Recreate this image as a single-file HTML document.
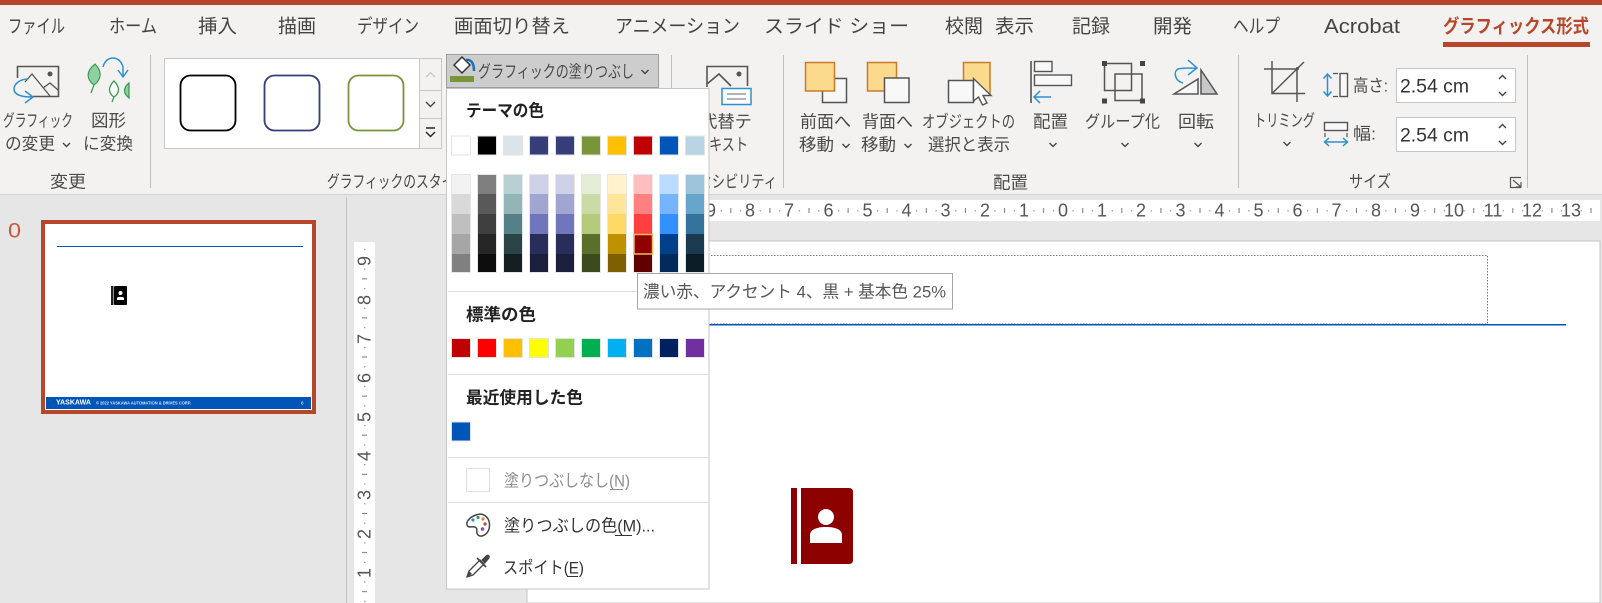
<!DOCTYPE html>
<html lang="ja">
<head>
<meta charset="utf-8">
<title>PowerPoint</title>
<style>
html,body{margin:0;padding:0;width:1602px;height:603px;overflow:hidden;background:#e6e6e6}
svg{display:block}
text{font-family:"Liberation Sans","Noto Sans CJK JP",sans-serif;font-size:17px;fill:#4a4a4a;dominant-baseline:central}
.t{font-size:19px;fill:#444}
.b{font-weight:700;fill:#222;font-size:17px}
.r{font-size:18px;fill:#555}
.ch{fill:none;stroke:#444;stroke-width:1.4}
.ic{fill:none;stroke:#555;stroke-width:1.6}
.sep{stroke:#dcdcdc;stroke-width:1}
.div{stroke:#bdbdbd;stroke-width:1}
.sw{stroke:#e3e3e3;stroke-width:1}
</style>
</head>
<body>
<svg width="1602" height="603" viewBox="0 0 1602 603" xmlns="http://www.w3.org/2000/svg">
<defs>
<pattern id="hr" x="1063" y="200" width="39.1" height="21" patternUnits="userSpaceOnUse">
<rect x="9.6" y="10" width="1" height="1.5" fill="#888"/><rect x="19.2" y="8" width="1" height="5" fill="#777"/><rect x="29" y="10" width="1" height="1.5" fill="#888"/>
</pattern>
<pattern id="vr" x="354" y="611" width="21" height="39.1" patternUnits="userSpaceOnUse">
<rect x="10" y="9.6" width="1.5" height="1" fill="#888"/><rect x="8" y="19.2" width="5" height="1" fill="#777"/><rect x="10" y="29" width="1.5" height="1" fill="#888"/>
</pattern>
</defs>

<!-- base -->
<rect width="1602" height="603" fill="#e6e6e6"/>
<rect width="1602" height="194" fill="#f3f2f1"/>
<rect y="194" width="1602" height="1" fill="#d2d2d2"/>
<rect width="1602" height="5" fill="#b7472a"/>

<!-- tabs -->
<text class="t" x="8" y="27" textLength="57" lengthAdjust="spacingAndGlyphs">ファイル</text>
<text class="t" x="109" y="27" textLength="48" lengthAdjust="spacingAndGlyphs">ホーム</text>
<text class="t" x="198" y="27" textLength="39" lengthAdjust="spacingAndGlyphs">挿入</text>
<text class="t" x="278" y="27" textLength="38" lengthAdjust="spacingAndGlyphs">描画</text>
<text class="t" x="357" y="27" textLength="62" lengthAdjust="spacingAndGlyphs">デザイン</text>
<text class="t" x="454" y="27" textLength="116" lengthAdjust="spacingAndGlyphs">画面切り替え</text>
<text class="t" x="615" y="27" textLength="125" lengthAdjust="spacingAndGlyphs">アニメーション</text>
<text class="t" x="764" y="27" textLength="145" lengthAdjust="spacingAndGlyphs">スライド ショー</text>
<text class="t" x="945" y="27" textLength="38" lengthAdjust="spacingAndGlyphs">校閲</text>
<text class="t" x="995" y="27" textLength="39" lengthAdjust="spacingAndGlyphs">表示</text>
<text class="t" x="1072" y="27" textLength="38" lengthAdjust="spacingAndGlyphs">記録</text>
<text class="t" x="1153" y="27" textLength="39" lengthAdjust="spacingAndGlyphs">開発</text>
<text class="t" x="1233" y="27" textLength="47" lengthAdjust="spacingAndGlyphs">ヘルプ</text>
<text class="t" x="1324" y="27" textLength="76" lengthAdjust="spacingAndGlyphs" style="font-size:20px">Acrobat</text>
<text class="t" x="1443" y="27" textLength="146" lengthAdjust="spacingAndGlyphs" style="font-weight:700;fill:#b7472a">グラフィックス形式</text>
<rect x="1443" y="42" width="147" height="5" fill="#b7472a"/>

<!-- group dividers -->
<path class="div" d="M150.500 55V188M671.500 55V188M783.500 55V188M1238.500 55V188M1527.500 55V188"/>

<!-- change group -->
<path d="M17.500 78V66.500H58.500V96.500H33" class="ic"/>
<path d="M25 82L32 74L50 96M43 88L50 83L58 90" fill="none" stroke="#555" stroke-width="1.300"/>
<circle cx="50" cy="74" r="2.500" fill="#555"/>
<path d="M28 79C20 79 14 84 14 89C14 94 20 97 32 97M25 91L33 97L25 103" fill="none" stroke="#2e8fd0" stroke-width="1.500"/>
<path d="M95 64C86 71 86 79 94 85C102 79 102 71 95 64Z" fill="#8fd19e" stroke="#3a9a55" stroke-width="1.200"/>
<path d="M94 85L91 93" stroke="#3a9a55" stroke-width="1.300" fill="none"/>
<path d="M103 67C106 55 120 55 123 67V76M118 70L123 77L128 70" fill="none" stroke="#2e8fd0" stroke-width="1.500"/>
<path d="M114 81C108 87 108 93 114 97C120 93 120 87 114 81ZM114 97L112 102" fill="#fff" stroke="#3a9a55" stroke-width="1.300"/>
<path d="M129 83C123 88 123 93 129 98V83Z" fill="#8fd19e" stroke="#3a9a55" stroke-width="1.300"/>
<text x="3" y="121" textLength="70" lengthAdjust="spacingAndGlyphs">グラフィック</text>
<text x="5" y="144" textLength="50" lengthAdjust="spacingAndGlyphs">の変更</text>
<path class="ch" d="M63 143L66.500 146.500L70 143"/>
<text x="91" y="121" textLength="35" lengthAdjust="spacingAndGlyphs">図形</text>
<text x="83" y="144" textLength="50" lengthAdjust="spacingAndGlyphs">に変換</text>
<text x="50" y="182" textLength="36" lengthAdjust="spacingAndGlyphs">変更</text>

<!-- gallery -->
<rect x="164.500" y="58.500" width="255" height="90" fill="#fff" stroke="#c8c8c8"/>
<rect x="180.500" y="75.500" width="55" height="55" rx="10" fill="#fff" stroke="#000" stroke-width="1.800"/>
<rect x="264.500" y="75.500" width="55" height="55" rx="10" fill="#fff" stroke="#373d78" stroke-width="1.800"/>
<rect x="348.500" y="75.500" width="55" height="55" rx="10" fill="#fff" stroke="#7a943a" stroke-width="1.800"/>
<rect x="419.500" y="58.500" width="22" height="32" fill="#f3f2f1" stroke="#c8c8c8"/>
<rect x="419.500" y="90.500" width="22" height="28" fill="#f3f2f1" stroke="#c8c8c8"/>
<rect x="419.500" y="118.500" width="22" height="30" fill="#f3f2f1" stroke="#c8c8c8"/>
<path d="M426 77L430.500 72.500L435 77" fill="none" stroke="#c8c8c8" stroke-width="1.300"/>
<path class="ch" d="M426 102L430.500 106.500L435 102" stroke="#222"/>
<path d="M426 128H435M426 132L430.500 136.500L435 132" fill="none" stroke="#222" stroke-width="1.400"/>
<text x="327" y="182" textLength="140" lengthAdjust="spacingAndGlyphs">グラフィックのスタイル</text>

<!-- fill button -->
<rect x="446.500" y="54.500" width="212" height="33" fill="#cdcdcd" stroke="#9f9f9f"/>
<path d="M454 65L462 57L470 65L462 73Z" fill="#fff" stroke="#333" stroke-width="1.500"/>
<path d="M466 60C471 59 474 63 474 71" fill="none" stroke="#1e6fb8" stroke-width="2.500"/>
<rect x="450" y="76" width="24" height="6" fill="#7a943a"/>
<text x="478" y="72" textLength="156" lengthAdjust="spacingAndGlyphs">グラフィックの塗りつぶし</text>
<path class="ch" d="M641.500 70L645 73.500L648.500 70"/>

<!-- alt text -->
<path class="ic" d="M707 87V66.500H747.500V86M707 84L719 74L731 86"/>
<circle cx="739" cy="74" r="2.500" fill="#555"/>
<rect x="722" y="88.500" width="29" height="16" fill="#fff" stroke="#2e8fd0" stroke-width="1.500"/>
<path d="M727 94H746M727 99H746" stroke="#888" stroke-width="1.300"/>
<text x="700" y="122" textLength="52" lengthAdjust="spacingAndGlyphs">代替テ</text>
<text x="709" y="145" textLength="39" lengthAdjust="spacingAndGlyphs">キスト</text>
<text x="673" y="182" textLength="104" lengthAdjust="spacingAndGlyphs">アクセシビリティ</text>

<!-- arrange -->
<rect x="822.500" y="78.500" width="24" height="24" fill="#f8f8f8" stroke="#555" stroke-width="1.500"/>
<rect x="805.500" y="62.500" width="29" height="28.500" fill="#fbd98d" stroke="#c87b2a" stroke-width="1.500"/>
<rect x="867.500" y="62.500" width="29" height="28.500" fill="#fbd98d" stroke="#c87b2a" stroke-width="1.500"/>
<rect x="884.500" y="78" width="24.500" height="24.500" fill="#f8f8f8" stroke="#555" stroke-width="1.500"/>
<rect x="963.500" y="62.500" width="26.500" height="32" fill="#fbd98d" stroke="#c87b2a" stroke-width="1.500"/>
<rect x="948.500" y="80.500" width="25" height="22" fill="#f8f8f8" stroke="#555" stroke-width="1.500"/>
<path d="M973.500 78.500V101L978.500 97L982.500 105L987 103L983 95.500H991Z" fill="#fff" stroke="#555" stroke-width="1.400"/>
<text x="800" y="122" textLength="51" lengthAdjust="spacingAndGlyphs">前面へ</text>
<text x="799" y="145" textLength="35" lengthAdjust="spacingAndGlyphs">移動</text>
<path class="ch" d="M842.500 144L846 147.500L849.500 144"/>
<text x="862" y="122" textLength="51" lengthAdjust="spacingAndGlyphs">背面へ</text>
<text x="861" y="145" textLength="35" lengthAdjust="spacingAndGlyphs">移動</text>
<path class="ch" d="M904.500 144L908 147.500L911.500 144"/>
<text x="922" y="122" textLength="93" lengthAdjust="spacingAndGlyphs">オブジェクトの</text>
<text x="928" y="145" textLength="82" lengthAdjust="spacingAndGlyphs">選択と表示</text>
<text x="1033" y="122" textLength="35" lengthAdjust="spacingAndGlyphs">配置</text>
<path class="ch" d="M1049.500 143L1053 146.500L1056.500 143"/>
<text x="1085" y="122" textLength="75" lengthAdjust="spacingAndGlyphs">グループ化</text>
<path class="ch" d="M1121.500 143L1125 146.500L1128.500 143"/>
<text x="1178" y="122" textLength="36" lengthAdjust="spacingAndGlyphs">回転</text>
<path class="ch" d="M1194.500 143L1198 146.500L1201.500 143"/>
<text x="993" y="183" textLength="35" lengthAdjust="spacingAndGlyphs">配置</text>

<!-- align icon -->
<path d="M1031 61V103" stroke="#555" stroke-width="1.600"/>
<rect x="1034.500" y="61.500" width="17.500" height="10" fill="#f8f8f8" stroke="#555" stroke-width="1.400"/>
<rect x="1034.500" y="75" width="37" height="10.500" fill="#f8f8f8" stroke="#555" stroke-width="1.400"/>
<path d="M1051 97H1034M1040 91L1034 97L1040 103" fill="none" stroke="#2e8fd0" stroke-width="1.500"/>

<!-- group icon -->
<rect x="1104.500" y="63.500" width="27" height="27" fill="none" stroke="#555" stroke-width="1.500"/>
<rect x="1115" y="74" width="27" height="26.500" fill="none" stroke="#555" stroke-width="1.500"/>
<rect x="1102" y="61" width="5" height="5" fill="#444"/>
<rect x="1140" y="61" width="5" height="5" fill="#444"/>
<rect x="1102" y="98.500" width="5" height="5" fill="#444"/>
<rect x="1140" y="98.500" width="5" height="5" fill="#444"/>

<!-- rotate icon -->
<path d="M1183 83C1175 81 1173 72 1178 69C1181 68 1190 68 1196 68M1188 60L1197 68L1188 75" fill="none" stroke="#2e8fd0" stroke-width="1.500"/>
<path d="M1174 94L1198 79V94Z" fill="#f8f8f8" stroke="#555" stroke-width="1.500"/>
<path d="M1201 70L1217 94H1201Z" fill="#c8c8c8" stroke="#555" stroke-width="1.500"/>

<!-- crop -->
<path d="M1264 69H1299M1272 61V93.500H1305M1297 102V67M1272 93.500L1304 62" fill="none" stroke="#555" stroke-width="1.500"/>
<text x="1254" y="121" textLength="61" lengthAdjust="spacingAndGlyphs">トリミング</text>
<path class="ch" d="M1283.500 142L1287 145.500L1290.500 142"/>

<!-- size icons -->
<path d="M1327.500 75V95M1323.500 78.500L1327.500 74L1331.500 78.500M1323.500 91.500L1327.500 96L1331.500 91.500" fill="none" stroke="#2e8fd0" stroke-width="1.500"/>
<path d="M1333 73.500H1338M1333 96.500H1338" stroke="#555" stroke-width="1.300"/>
<rect x="1340" y="73.500" width="7.500" height="23" fill="#f8f8f8" stroke="#555" stroke-width="1.400"/>
<rect x="1324.500" y="122.500" width="23" height="8" fill="#f8f8f8" stroke="#555" stroke-width="1.400"/>
<path d="M1325 133V137M1347 133V137" stroke="#555" stroke-width="1.200"/>
<path d="M1325 142H1347M1329 138L1324.500 142L1329 146M1343 138L1347.500 142L1343 146" fill="none" stroke="#2e8fd0" stroke-width="1.500"/>
<text x="1353" y="86" textLength="35" lengthAdjust="spacingAndGlyphs">高さ:</text>
<text x="1353" y="134" textLength="23" lengthAdjust="spacingAndGlyphs">幅:</text>
<rect x="1396.500" y="68.500" width="119" height="34" fill="#fff" stroke="#c6c6c6"/>
<rect x="1396.500" y="117.500" width="119" height="34" fill="#fff" stroke="#c6c6c6"/>
<text x="1400" y="87" textLength="69" lengthAdjust="spacingAndGlyphs" style="font-size:19px;fill:#333">2.54 cm</text>
<text x="1400" y="136" textLength="69" lengthAdjust="spacingAndGlyphs" style="font-size:19px;fill:#333">2.54 cm</text>
<path class="ch" d="M1499 79L1502.500 75.500L1506 79M1499 92L1502.500 95.500L1506 92M1499 128L1502.500 124.500L1506 128M1499 141L1502.500 144.500L1506 141" stroke-width="1.200"/>
<text x="1349" y="182" textLength="42" lengthAdjust="spacingAndGlyphs">サイズ</text>
<path d="M1521 187.500H1510.500V177.500H1521M1513 180L1521 187M1521 182V187H1516" fill="none" stroke="#555" stroke-width="1.200"/>

<!-- side panel -->
<path d="M346.500 197V603" stroke="#c0c0c0"/>
<text x="8" y="231" textLength="13" lengthAdjust="spacingAndGlyphs" style="font-size:21px;fill:#c9573a">0</text>
<rect x="43" y="222" width="271" height="190" fill="#fff" stroke="#b7472a" stroke-width="4"/>
<rect x="57" y="246" width="246" height="1" fill="#0055b8"/>
<rect x="111" y="286" width="2.500" height="19" fill="#222"/>
<rect x="114" y="286" width="13" height="19" rx="1" fill="#000"/>
<circle cx="120.500" cy="293" r="2" fill="#fff"/>
<path d="M117 300V298C117 296.500 124 296.500 124 298V300Z" fill="#fff"/>
<rect x="46" y="397" width="265" height="12" fill="#0055b8"/>
<text x="56" y="403" textLength="35" style="font-size:7px;font-weight:700;fill:#fff" lengthAdjust="spacingAndGlyphs">YASKAWA</text>
<text x="96" y="403" textLength="95" style="font-size:4.500px;font-weight:700;fill:#dbe7f5" lengthAdjust="spacingAndGlyphs">© 2022 YASKAWA AUTOMATION &amp; DRIVES CORP.</text>
<text x="301" y="403" style="font-size:4.500px;fill:#fff">8</text>

<!-- h ruler -->
<rect x="700" y="200" width="900" height="21" fill="#fff"/>
<rect x="700" y="200" width="900" height="21" fill="url(#hr)"/>
<text x="711" y="210.500" class="r" text-anchor="middle">9</text>
<text x="750" y="210.500" class="r" text-anchor="middle">8</text>
<text x="789" y="210.500" class="r" text-anchor="middle">7</text>
<text x="828.500" y="210.500" class="r" text-anchor="middle">6</text>
<text x="867.500" y="210.500" class="r" text-anchor="middle">5</text>
<text x="906.500" y="210.500" class="r" text-anchor="middle">4</text>
<text x="945.500" y="210.500" class="r" text-anchor="middle">3</text>
<text x="985" y="210.500" class="r" text-anchor="middle">2</text>
<text x="1024" y="210.500" class="r" text-anchor="middle">1</text>
<text x="1063" y="210.500" class="r" text-anchor="middle">0</text>
<text x="1102" y="210.500" class="r" text-anchor="middle">1</text>
<text x="1141" y="210.500" class="r" text-anchor="middle">2</text>
<text x="1180.500" y="210.500" class="r" text-anchor="middle">3</text>
<text x="1219.500" y="210.500" class="r" text-anchor="middle">4</text>
<text x="1258.500" y="210.500" class="r" text-anchor="middle">5</text>
<text x="1297.500" y="210.500" class="r" text-anchor="middle">6</text>
<text x="1336.500" y="210.500" class="r" text-anchor="middle">7</text>
<text x="1376" y="210.500" class="r" text-anchor="middle">8</text>
<text x="1415" y="210.500" class="r" text-anchor="middle">9</text>
<text x="1454" y="210.500" class="r" text-anchor="middle">10</text>
<text x="1493" y="210.500" class="r" text-anchor="middle">11</text>
<text x="1532" y="210.500" class="r" text-anchor="middle">12</text>
<text x="1571" y="210.500" class="r" text-anchor="middle">13</text>

<!-- v ruler -->
<rect x="354" y="242" width="21" height="361" fill="#fff"/>
<rect x="354" y="242" width="21" height="361" fill="url(#vr)"/>
<text class="r" text-anchor="middle" transform="translate(364.500 261) rotate(-90)">9</text>
<text class="r" text-anchor="middle" transform="translate(364.500 300) rotate(-90)">8</text>
<text class="r" text-anchor="middle" transform="translate(364.500 339) rotate(-90)">7</text>
<text class="r" text-anchor="middle" transform="translate(364.500 378) rotate(-90)">6</text>
<text class="r" text-anchor="middle" transform="translate(364.500 417) rotate(-90)">5</text>
<text class="r" text-anchor="middle" transform="translate(364.500 456) rotate(-90)">4</text>
<text class="r" text-anchor="middle" transform="translate(364.500 495) rotate(-90)">3</text>
<text class="r" text-anchor="middle" transform="translate(364.500 534) rotate(-90)">2</text>
<text class="r" text-anchor="middle" transform="translate(364.500 573) rotate(-90)">1</text>

<!-- slide -->
<rect x="527" y="241" width="1073" height="362" fill="#fff" stroke="#c4c4c4"/>
<rect x="660" y="255.500" width="827.500" height="68.500" fill="none" stroke="#777" stroke-dasharray="1.500 1.500"/>
<text x="775" y="299" textLength="90" lengthAdjust="spacingAndGlyphs" style="font-size:24px;fill:#111;font-weight:700">テキスト目録</text>
<rect x="660" y="324" width="906" height="1.500" fill="#0055b8"/>
<rect x="791" y="488" width="6" height="76" fill="#8c0000"/>
<path d="M801 488H849Q853 488 853 492V560Q853 564 849 564H801Z" fill="#8c0000"/>
<circle cx="826" cy="517" r="8" fill="#fff"/>
<path d="M810 543V535C810 530 816 527 826 527C836 527 842 530 842 535V543Z" fill="#fff"/>

<!-- menu -->
<rect x="446.500" y="88.500" width="262.500" height="500.500" fill="#fff" stroke="#c6c6c6"/>
<text x="466" y="111" class="b" textLength="78" lengthAdjust="spacingAndGlyphs">テーマの色</text>

<!-- theme row -->
<rect class="sw" x="451.500" y="136" width="19" height="19" fill="#ffffff"/>
<rect class="sw" x="477.500" y="136" width="19" height="19" fill="#000000"/>
<rect class="sw" x="503.500" y="136" width="19" height="19" fill="#dbe5e7"/>
<rect class="sw" x="529.500" y="136" width="19" height="19" fill="#373d78"/>
<rect class="sw" x="555.500" y="136" width="19" height="19" fill="#373d78"/>
<rect class="sw" x="581.500" y="136" width="19" height="19" fill="#7a943a"/>
<rect class="sw" x="607.500" y="136" width="19" height="19" fill="#ffc000"/>
<rect class="sw" x="633.500" y="136" width="19" height="19" fill="#c00000"/>
<rect class="sw" x="659.500" y="136" width="19" height="19" fill="#0055b8"/>
<rect class="sw" x="685.500" y="136" width="19" height="19" fill="#b9d4e5"/>

<!-- shades -->
<g>
<rect x="451" y="174" width="20" height="99" fill="#e6e6e6"/>
<rect x="452" y="175" width="18" height="19" fill="#f2f2f2"/><rect x="452" y="194" width="18" height="20" fill="#d9d9d9"/><rect x="452" y="214" width="18" height="20" fill="#bfbfbf"/><rect x="452" y="234" width="18" height="20" fill="#a6a6a6"/><rect x="452" y="254" width="18" height="18" fill="#808080"/>
<rect x="477" y="174" width="20" height="99" fill="#e6e6e6"/>
<rect x="478" y="175" width="18" height="19" fill="#7f7f7f"/><rect x="478" y="194" width="18" height="20" fill="#595959"/><rect x="478" y="214" width="18" height="20" fill="#3f3f3f"/><rect x="478" y="234" width="18" height="20" fill="#262626"/><rect x="478" y="254" width="18" height="18" fill="#0d0d0d"/>
<rect x="503" y="174" width="20" height="99" fill="#e6e6e6"/>
<rect x="504" y="175" width="18" height="19" fill="#b8d0d2"/><rect x="504" y="194" width="18" height="20" fill="#93b5b8"/><rect x="504" y="214" width="18" height="20" fill="#558186"/><rect x="504" y="234" width="18" height="20" fill="#2b4346"/><rect x="504" y="254" width="18" height="18" fill="#151f21"/>
<rect x="529" y="174" width="20" height="99" fill="#e6e6e6"/>
<rect x="530" y="175" width="18" height="19" fill="#cfd1e9"/><rect x="530" y="194" width="18" height="20" fill="#a0a5d1"/><rect x="530" y="214" width="18" height="20" fill="#6f77ba"/><rect x="530" y="234" width="18" height="20" fill="#292d5a"/><rect x="530" y="254" width="18" height="18" fill="#1b1e3c"/>
<rect x="555" y="174" width="20" height="99" fill="#e6e6e6"/>
<rect x="556" y="175" width="18" height="19" fill="#cfd1e9"/><rect x="556" y="194" width="18" height="20" fill="#a0a5d1"/><rect x="556" y="214" width="18" height="20" fill="#6f77ba"/><rect x="556" y="234" width="18" height="20" fill="#292d5a"/><rect x="556" y="254" width="18" height="18" fill="#1b1e3c"/>
<rect x="581" y="174" width="20" height="99" fill="#e6e6e6"/>
<rect x="582" y="175" width="18" height="19" fill="#e4ecd3"/><rect x="582" y="194" width="18" height="20" fill="#cbdba7"/><rect x="582" y="214" width="18" height="20" fill="#b3c97c"/><rect x="582" y="234" width="18" height="20" fill="#5b6f2c"/><rect x="582" y="254" width="18" height="18" fill="#3d4a1d"/>
<rect x="607" y="174" width="20" height="99" fill="#e6e6e6"/>
<rect x="608" y="175" width="18" height="19" fill="#fff2cc"/><rect x="608" y="194" width="18" height="20" fill="#ffe599"/><rect x="608" y="214" width="18" height="20" fill="#ffd966"/><rect x="608" y="234" width="18" height="20" fill="#bf9000"/><rect x="608" y="254" width="18" height="18" fill="#7f6000"/>
<rect x="633" y="174" width="20" height="99" fill="#e6e6e6"/>
<rect x="634" y="175" width="18" height="19" fill="#ffbfbf"/><rect x="634" y="194" width="18" height="20" fill="#ff8080"/><rect x="634" y="214" width="18" height="20" fill="#ff4040"/><rect x="634" y="234" width="18" height="20" fill="#900000"/><rect x="634" y="254" width="18" height="18" fill="#600000"/>
<rect x="659" y="174" width="20" height="99" fill="#e6e6e6"/>
<rect x="660" y="175" width="18" height="19" fill="#bbdaff"/><rect x="660" y="194" width="18" height="20" fill="#77b4ff"/><rect x="660" y="214" width="18" height="20" fill="#3390ff"/><rect x="660" y="234" width="18" height="20" fill="#003f8a"/><rect x="660" y="254" width="18" height="18" fill="#002a5c"/>
<rect x="685" y="174" width="20" height="99" fill="#e6e6e6"/>
<rect x="686" y="175" width="18" height="19" fill="#9cc3d9"/><rect x="686" y="194" width="18" height="20" fill="#68a5cb"/><rect x="686" y="214" width="18" height="20" fill="#33739e"/><rect x="686" y="234" width="18" height="20" fill="#1b3a4f"/><rect x="686" y="254" width="18" height="18" fill="#0c1c26"/>
</g>
<rect x="634" y="234.500" width="18.500" height="19.500" fill="#900000" stroke="#f3b860" stroke-width="1.500"/>

<path class="sep" d="M448 291.500H708M448 374.500H708M448 457.500H708M448 502.500H708"/>
<text x="466" y="315" class="b" textLength="70" lengthAdjust="spacingAndGlyphs">標準の色</text>

<rect class="sw" x="451.500" y="338.500" width="19" height="19" fill="#c00000"/>
<rect class="sw" x="477.500" y="338.500" width="19" height="19" fill="#ff0000"/>
<rect class="sw" x="503.500" y="338.500" width="19" height="19" fill="#ffc000"/>
<rect class="sw" x="529.500" y="338.500" width="19" height="19" fill="#ffff00"/>
<rect class="sw" x="555.500" y="338.500" width="19" height="19" fill="#92d050"/>
<rect class="sw" x="581.500" y="338.500" width="19" height="19" fill="#00b050"/>
<rect class="sw" x="607.500" y="338.500" width="19" height="19" fill="#00b0f0"/>
<rect class="sw" x="633.500" y="338.500" width="19" height="19" fill="#0070c0"/>
<rect class="sw" x="659.500" y="338.500" width="19" height="19" fill="#002060"/>
<rect class="sw" x="685.500" y="338.500" width="19" height="19" fill="#7030a0"/>

<text x="466" y="398" class="b" textLength="117" lengthAdjust="spacingAndGlyphs">最近使用した色</text>
<rect class="sw" x="451.500" y="422" width="19" height="19" fill="#0055b8"/>

<rect x="466.500" y="468.500" width="23" height="23" fill="#fff" stroke="#e0e0e0"/>
<text x="504" y="481" textLength="126" lengthAdjust="spacingAndGlyphs" style="fill:#8c8c8c">塗りつぶしなし(N)</text>
<rect x="610" y="489" width="13" height="1" fill="#8c8c8c"/>

<!-- palette -->
<path d="M476 515C484 512 490 518 489.500 526C489 534 482 538 478 535C475 532 479 529 475 527C472 526 469 528 467.500 526C465 522 470 517 476 515Z" fill="#fff" stroke="#444" stroke-width="1.500"/>
<circle cx="473" cy="520" r="1.600" fill="#2e8fd0"/><circle cx="478" cy="517.500" r="1.600" fill="#3a9a55"/><circle cx="483" cy="519" r="1.600" fill="#e08a2a"/><circle cx="485" cy="524" r="1.600" fill="#c8443a"/><circle cx="482.500" cy="529" r="1.800" fill="#8a4fb0"/>
<text x="504" y="526" textLength="151" lengthAdjust="spacingAndGlyphs" style="fill:#333">塗りつぶしの色(M)...</text>
<rect x="615" y="535" width="17" height="1" fill="#333"/>

<!-- eyedropper -->
<path d="M467 577L469 571L480 560L484 564L473 575Z" fill="#fff" stroke="#444" stroke-width="1.300"/>
<path d="M477 558L486 567" stroke="#444" stroke-width="1.600" fill="none"/>
<path d="M482 560L486 556C488 554 490 556 489 558L485 563Z" fill="#444" stroke="#444" stroke-width="1"/>
<path d="M467 577L469 571L472 574Z" fill="#444"/>
<text x="503" y="568" textLength="81" lengthAdjust="spacingAndGlyphs" style="fill:#333">スポイト(E)</text>
<rect x="567" y="576" width="11" height="1" fill="#333"/>

<!-- tooltip -->
<rect x="637.500" y="273.500" width="315" height="35.500" fill="#fff" stroke="#a6a6a6"/>
<text x="643" y="292" textLength="303" lengthAdjust="spacingAndGlyphs" style="fill:#575757">濃い赤、アクセント 4、黒 + 基本色 25%</text>
</svg>
</body>
</html>
